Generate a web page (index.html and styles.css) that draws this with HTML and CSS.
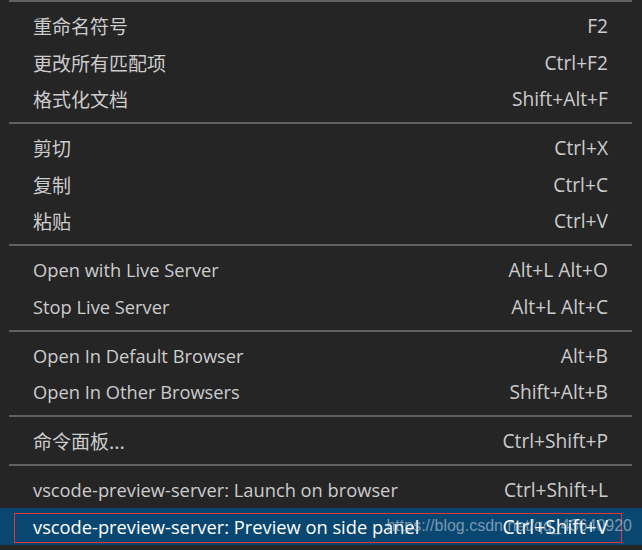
FILE: index.html
```html
<!DOCTYPE html>
<html lang="zh-CN">
<head>
<meta charset="utf-8">
<title>Context menu</title>
<link rel="stylesheet" href="styles.css">
</head>
<body>
<div class="menu">
  <div class="sep"></div>
  <div class="item"><span class="label zh">重命名符号</span><span class="key">F2</span></div>
  <div class="item"><span class="label zh">更改所有匹配项</span><span class="key">Ctrl+F2</span></div>
  <div class="item"><span class="label zh">格式化文档</span><span class="key">Shift+Alt+F</span></div>
  <div class="sep"></div>
  <div class="item"><span class="label zh">剪切</span><span class="key">Ctrl+X</span></div>
  <div class="item"><span class="label zh">复制</span><span class="key">Ctrl+C</span></div>
  <div class="item"><span class="label zh">粘贴</span><span class="key">Ctrl+V</span></div>
  <div class="sep"></div>
  <div class="item"><span class="label">Open with Live Server</span><span class="key">Alt+L Alt+O</span></div>
  <div class="item"><span class="label">Stop Live Server</span><span class="key">Alt+L Alt+C</span></div>
  <div class="sep"></div>
  <div class="item"><span class="label">Open In Default Browser</span><span class="key">Alt+B</span></div>
  <div class="item"><span class="label">Open In Other Browsers</span><span class="key">Shift+Alt+B</span></div>
  <div class="sep"></div>
  <div class="item"><span class="label zh">命令面板...</span><span class="key">Ctrl+Shift+P</span></div>
  <div class="sep"></div>
  <div class="item"><span class="label">vscode-preview-server: Launch on browser</span><span class="key">Ctrl+Shift+L</span></div>
  <div class="item active"><span class="label">vscode-preview-server: Preview on side panel</span><span class="key">Ctrl+Shift+V</span>
    <span class="mark"></span>
    <span class="watermark">https://blog.csdn.net/qq_43640920</span>
  </div>
</div>
</body>
</html>
```
FILE: styles.css
```css
html, body {
  margin: 0;
  padding: 0;
  background: #252526;
}
body {
  width: 642px;
  height: 550px;
  overflow: hidden;
  font-family: "Open Sans", "Noto Sans CJK SC", sans-serif;
  font-size: 18.3px;
  color: #cccccc;
}
.menu {
  margin-top: -4px;
  display: flex;
  flex-direction: column;
}
.menu > .sep:first-child {
  margin-top: 4px;
}
.sep {
  height: 2px;
  margin: 5px 10px 5.5px 9px;
  background: #616161;
}
.item {
  position: relative;
  height: 36.5px;
  display: flex;
  align-items: center;
  justify-content: space-between;
  padding: 0 34px 0 33px;
  white-space: nowrap;
}
.label.zh {
  font-size: 19px;
  font-family: "Noto Sans CJK SC", "Open Sans", sans-serif;
}
.key {
  font-size: 19.2px;
}
.item.active {
  background: #094771;
  color: #ffffff;
}
.mark {
  position: absolute;
  left: 14px;
  right: 20px;
  top: 5px;
  bottom: 2px;
  border: 1px solid #e0353b;
  pointer-events: none;
}
.watermark {
  position: absolute;
  right: 10px;
  top: 9px;
  font-family: "Liberation Sans", Arial, sans-serif;
  font-size: 16px;
  color: rgba(215, 222, 230, 0.55);
  pointer-events: none;
}
```
